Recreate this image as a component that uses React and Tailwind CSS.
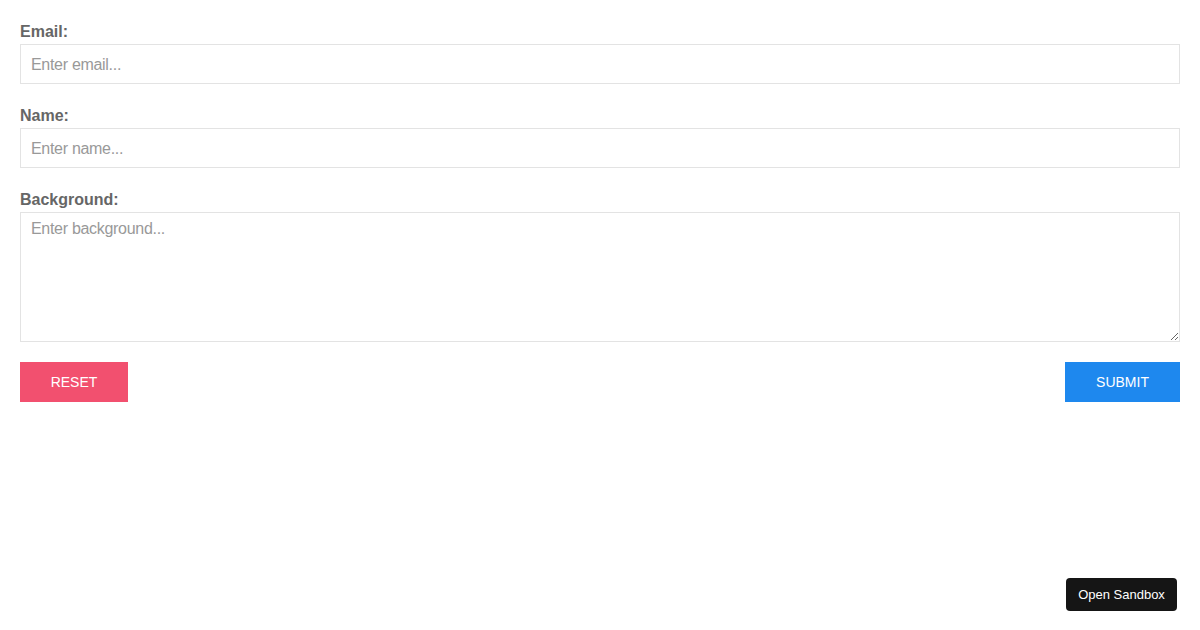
export default function App() {
  const font = { fontFamily: '"Liberation Sans", Arial, Helvetica, sans-serif' };
  return (
    <div className="min-h-[630px] bg-white p-5" style={font}>
      <form className="flex flex-col gap-5" onSubmit={(e) => e.preventDefault()}>
        <div className="flex flex-col">
          <label className="text-base leading-6 font-bold text-[#666666]">Email:</label>
          <input
            type="email"
            placeholder="Enter email..."
            className="h-10 w-full border border-[#e3e3e3] px-[10px] pt-[2px] text-base tracking-[-0.3px] text-[#333] outline-none placeholder:text-[#999999]"
          />
        </div>
        <div className="flex flex-col">
          <label className="text-base leading-6 font-bold text-[#666666]">Name:</label>
          <input
            type="text"
            placeholder="Enter name..."
            className="h-10 w-full border border-[#e3e3e3] px-[10px] pt-[2px] text-base tracking-[-0.3px] text-[#333] outline-none placeholder:text-[#999999]"
          />
        </div>
        <div className="flex flex-col">
          <label className="text-base leading-6 font-bold text-[#666666]">Background:</label>
          <textarea
            placeholder="Enter background..."
            className="block h-[130px] w-full border border-[#e3e3e3] px-[10px] py-[6px] text-base leading-5 tracking-[-0.3px] text-[#333] outline-none placeholder:text-[#999999]"
          />
        </div>
        <div className="flex items-center justify-between">
          <button type="reset" className="h-10 w-[108px] bg-[#f2506f] text-sm uppercase text-white">
            RESET
          </button>
          <button type="submit" className="h-10 w-[115px] bg-[#1e88ee] text-sm uppercase text-white">
            SUBMIT
          </button>
        </div>
      </form>
      <button
        className="fixed bottom-[19px] right-[23px] h-[33px] w-[111px] rounded bg-[#151515] text-[13px] text-white"
        style={font}
      >
        Open Sandbox
      </button>
    </div>
  );
}
